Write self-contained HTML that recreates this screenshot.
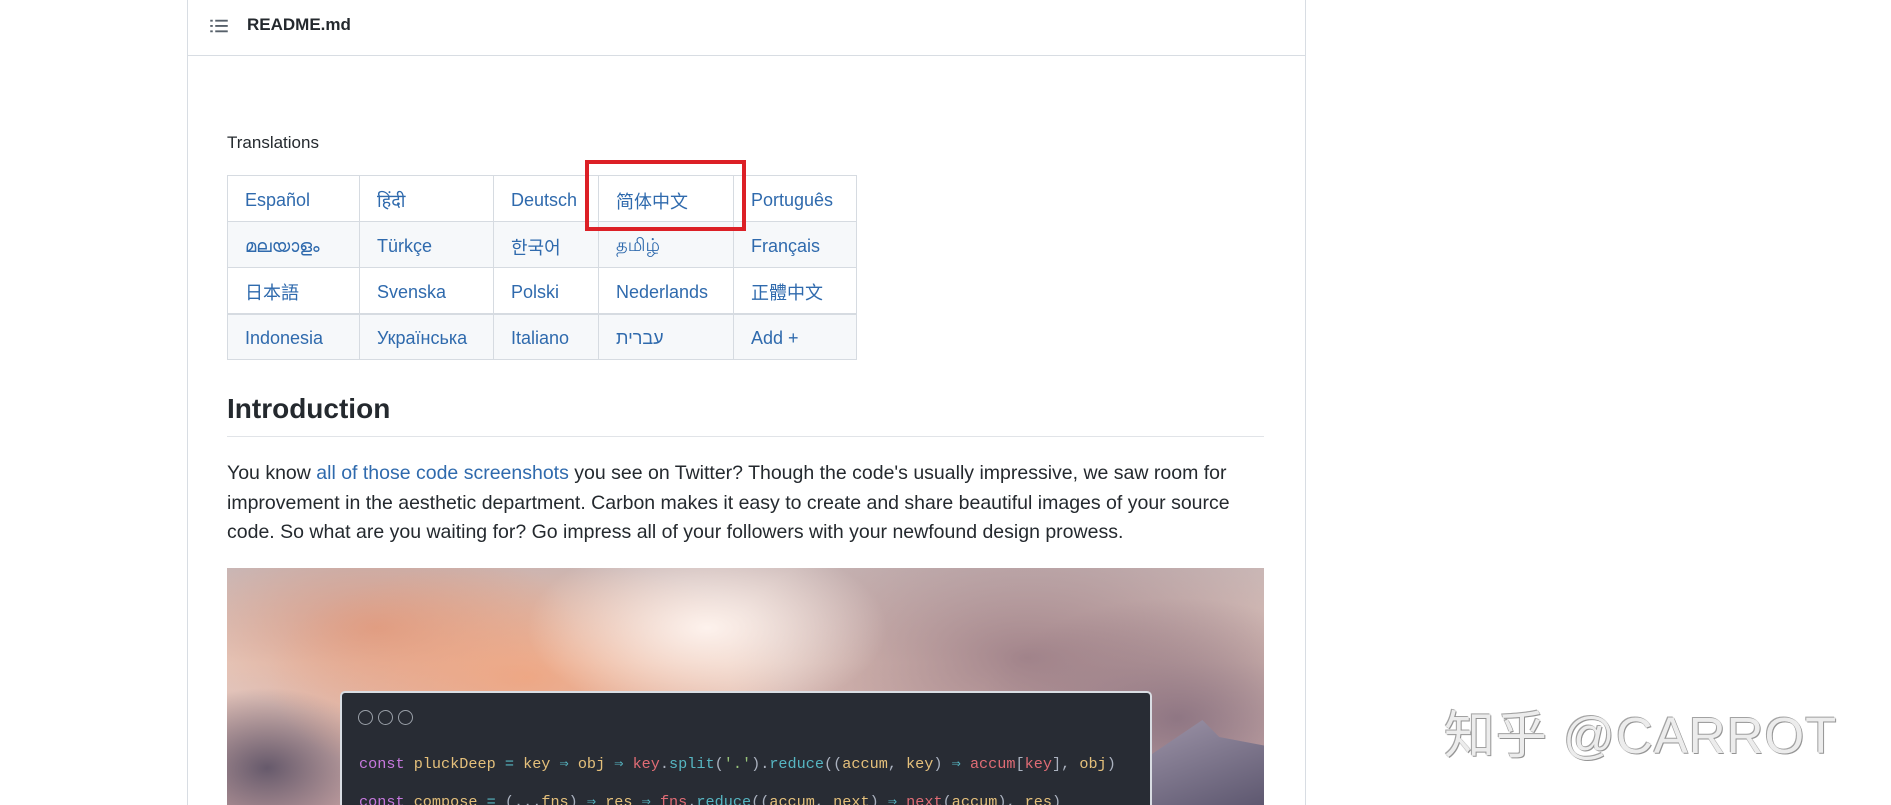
<!DOCTYPE html>
<html><head><meta charset="utf-8"><style>
*{margin:0;padding:0;box-sizing:border-box}
html,body{width:1891px;height:805px;overflow:hidden}
body{background:#fff;font-family:"Liberation Sans","Noto Sans CJK SC",sans-serif;color:#24292e}
#wrap{position:relative;width:1891px;height:805px;overflow:hidden}
.box{position:absolute;left:187px;top:-2px;width:1119px;height:820px;border:1px solid #d8dde3}
.hdr{position:absolute;left:0;top:0;width:100%;height:57px;border-bottom:1px solid #d8dde3}
.hdr .t{position:absolute;left:59px;top:16px;font-size:17px;font-weight:bold;color:#24292e}
.a{position:absolute}
table{position:absolute;left:227px;top:175px;border-collapse:collapse;font-size:18px}
td{border:1px solid #d6dbe1;padding:4px 17px 0;height:46px;color:#2f6aad;white-space:nowrap}
tr:nth-child(2) td,tr:nth-child(4) td{background:#f6f8fa}
tr:nth-child(4) td{border-top:2px solid #d6dbe1}
.red{position:absolute;left:585px;top:160px;width:161px;height:71px;border:4px solid #dc2026}
h2{position:absolute;left:227px;top:390px;width:1037px;font-size:28px;font-weight:600;padding-bottom:8px;border-bottom:1px solid #e1e4e8;line-height:38px}
p{position:absolute;left:227px;top:459px;width:1040px;font-size:19.5px;line-height:29.5px}
p a{color:#2f6aad;text-decoration:none}
.img{position:absolute;left:227px;top:568px;width:1037px;height:237px;
background:
radial-gradient(ellipse 180px 90px at 480px 60px,rgba(255,245,240,.95),transparent),
radial-gradient(ellipse 260px 120px at 300px 110px,rgba(240,160,120,.8),transparent),
radial-gradient(ellipse 200px 90px at 150px 60px,rgba(220,140,110,.7),transparent),
radial-gradient(ellipse 300px 140px at 800px 90px,rgba(150,120,130,.85),transparent),
radial-gradient(ellipse 200px 120px at 950px 150px,rgba(120,100,120,.8),transparent),
radial-gradient(ellipse 120px 80px at 40px 200px,rgba(90,80,100,.9),transparent),
linear-gradient(180deg,#c9b6b5 0%,#e6c9bd 40%,#cfa9a8 100%)}
.mtn{position:absolute;left:1152px;top:720px;width:112px;height:85px;background:linear-gradient(160deg,#9b92a6,#5e5870);clip-path:polygon(0 40%,45% 0,60% 20%,100% 30%,100% 100%,0 100%)}
.code{position:absolute;left:340px;top:691px;width:812px;height:114px;background:#282c34;border:2px solid #d9dde3;border-bottom:none;border-radius:5px 5px 0 0;font-family:"Liberation Mono",monospace;font-size:15.2px;overflow:hidden}
.dot{position:absolute;top:17px;width:15px;height:15px;border:1.5px solid #9aa0a8;border-radius:50%}
.l{position:absolute;left:17px;white-space:pre;color:#e5c07b}
.k{color:#c678dd}.o{color:#56b6c2}.r{color:#e06c75}.s{color:#98c379}.w{color:#abb2bf}
.wm{position:absolute;left:1444px;top:694px;font-size:51px;color:#ececec;letter-spacing:1px;text-shadow:0 0 1px #777,1px 1px 0 #999,-1px -1px 0 #aaa;white-space:nowrap}
</style></head><body><div id="wrap">
<div class="box"><div class="hdr">
<svg class="a" style="left:21px;top:17px" width="20" height="20" viewBox="0 0 16 16" fill="#57606a"><rect x="1" y="3" width="2" height="1.5"/><rect x="1" y="7.2" width="2" height="1.5"/><rect x="1" y="11.5" width="2" height="1.5"/><rect x="5" y="3" width="10" height="1.5"/><rect x="5" y="7.2" width="10" height="1.5"/><rect x="5" y="11.5" width="10" height="1.5"/></svg>
<div class="t">README.md</div></div></div>
<div class="a" style="left:227px;top:133px;font-size:17px">Translations</div>
<table>
<tr><td style="width:132px">Español</td><td style="width:134px">हिंदी</td><td style="width:105px">Deutsch</td><td style="width:135px">简体中文</td><td style="width:123px">Português</td></tr>
<tr><td>മലയാളം</td><td>Türkçe</td><td>한국어</td><td>தமிழ்</td><td>Français</td></tr>
<tr><td>日本語</td><td>Svenska</td><td>Polski</td><td>Nederlands</td><td>正體中文</td></tr>
<tr><td>Indonesia</td><td>Українська</td><td>Italiano</td><td>עברית</td><td>Add +</td></tr>
</table>
<div class="red"></div>
<h2>Introduction</h2>
<p>You know <a>all of those code screenshots</a> you see on Twitter? Though the code's usually impressive, we saw room for improvement in the aesthetic department. Carbon makes it easy to create and share beautiful images of your source code. So what are you waiting for? Go impress all of your followers with your newfound design prowess.</p>
<div class="img"></div><div class="mtn"></div>
<div class="code">
<div class="dot" style="left:16px"></div><div class="dot" style="left:36px"></div><div class="dot" style="left:56px"></div>
<div class="l" style="top:61px"><span class="k">const</span> pluckDeep <span class="o">=</span> key <span class="o">⇒</span> obj <span class="o">⇒</span> <span class="r">key</span><span class="w">.</span><span class="o">split</span><span class="w">(</span><span class="s">'.'</span><span class="w">).</span><span class="o">reduce</span><span class="w">((</span>accum<span class="w">,</span> key<span class="w">)</span> <span class="o">⇒</span> <span class="r">accum</span><span class="w">[</span><span class="r">key</span><span class="w">],</span> obj<span class="w">)</span></div>
<div class="l" style="top:99px"><span class="k">const</span> compose <span class="o">=</span> <span class="w">(...</span>fns<span class="w">)</span> <span class="o">⇒</span> res <span class="o">⇒</span> <span class="r">fns</span><span class="w">.</span><span class="o">reduce</span><span class="w">((</span>accum<span class="w">,</span> next<span class="w">)</span> <span class="o">⇒</span> <span class="r">next</span><span class="w">(</span>accum<span class="w">),</span> res<span class="w">)</span></div>
</div>
<div class="wm">知乎 @CARROT</div>
</div></body></html>
